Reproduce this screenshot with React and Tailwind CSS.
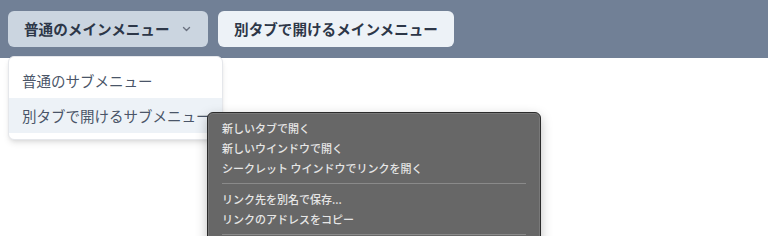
import React from "react";

const jp = { fontFamily: '"Noto Sans CJK JP", "Noto Sans", sans-serif' };

function Sep() {
  return <div className="my-[5px] h-px bg-[#8a8a8a] mx-[14px]" />;
}

function Ctx({ children }) {
  return <div className="h-5 leading-5 px-[14px] text-[11px] font-medium text-[#e6e6e6]">{children}</div>;
}

export default function App() {
  return (
    <div className="relative w-[768px] h-[236px] bg-white overflow-hidden" style={jp}>
      <div className="h-[58px] bg-[#718096] flex gap-[10px] px-2 pt-[11px] items-start">
        <button className="h-9 w-[200px] rounded-md bg-[#cbd5e0] text-[#2d3748] font-bold text-[14.6px] flex items-center pl-4 pr-3">
          <span>普通のメインメニュー</span>
          <svg className="ml-auto mr-[5px]" width="9" height="6" viewBox="0 0 9 6" fill="none" stroke="#6b7280" strokeWidth="1.4" strokeLinecap="round" strokeLinejoin="round">
            <path d="M1.5 1.5 4.5 4.5 7.5 1.5" />
          </svg>
        </button>
        <button className="h-9 w-[236px] rounded-md bg-[#edf2f7] text-[#2d3748] font-bold text-[14.6px] flex items-center justify-center">
          別タブで開けるメインメニュー
        </button>
      </div>

      <div className="absolute left-2 top-[56px] w-[215px] bg-white rounded-md border border-[#e5e7eb] shadow-md py-[6px]">
        <div className="h-[35px] flex items-center pl-[13px] text-[14.5px] text-[#4a5568]">普通のサブメニュー</div>
        <div className="h-[35px] flex items-center pl-[13px] text-[14.5px] text-[#4a5568] bg-[#edf2f7] whitespace-nowrap">別タブで開けるサブメニュー</div>
      </div>

      <div className="absolute left-[207px] top-[112px] w-[334px] h-[160px] bg-[#676767] rounded-md border border-[#2b2b2b] pt-[5px]" style={{ boxShadow: "inset 0 0 0 1px rgba(255,255,255,0.12), 0 4px 12px rgba(0,0,0,0.25)" }}>
        <Ctx>新しいタブで開く</Ctx>
        <Ctx>新しいウインドウで開く</Ctx>
        <Ctx>シークレット ウインドウでリンクを開く</Ctx>
        <Sep />
        <Ctx>リンク先を別名で保存...</Ctx>
        <Ctx>リンクのアドレスをコピー</Ctx>
        <Sep />
      </div>
    </div>
  );
}
